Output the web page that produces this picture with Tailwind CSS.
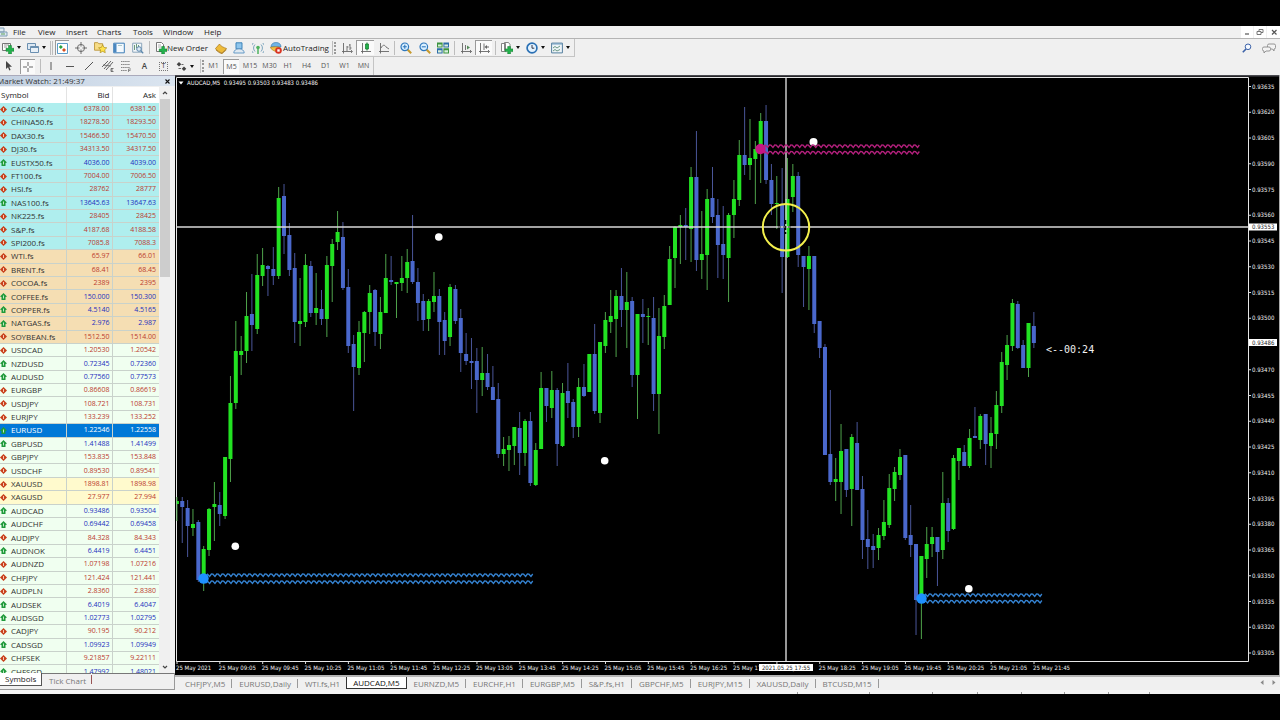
<!DOCTYPE html>
<html lang="en">
<head>
<meta charset="utf-8">
<title>AUDCAD,M5</title>
<script src="https://cdn.jsdelivr.net/npm/@tailwindcss/browser@4"></script>
</head>
<body class="flex h-screen flex-col overflow-hidden bg-black py-[26px] font-['Open_Sans','Noto_Sans',sans-serif] text-[8px] leading-[12px] text-[#222]">

<!-- Menu bar -->
<header class="flex h-[13px] shrink-0 items-center border-b border-[#b4b4b4] bg-[#f0f0f0]">
  <svg class="mr-[5px] h-[10px] w-[8px]" viewBox="0 0 8 10" fill="none"><path d="M0 1h4v4H0M0 5h7v4H0" fill="#dfeaf2" stroke="#7f9db5"/><path d="M2 6v2M4 6v2" stroke="#5aa05a"/></svg>
  <nav class="flex items-center whitespace-nowrap">
    <button class="w-[25px] text-left">File</button>
    <button class="w-[28px] text-left">View</button>
    <button class="w-[31px] text-left">Insert</button>
    <button class="w-[36px] text-left">Charts</button>
    <button class="w-[30px] text-left">Tools</button>
    <button class="w-[41px] text-left">Window</button>
    <button class="text-left">Help</button>
  </nav>
  <div class="ml-auto flex h-full items-center">
    <button aria-label="Minimize" class="flex h-full w-[12px] items-center justify-center bg-white"><svg class="size-[8px]" viewBox="0 0 8 8"><path d="M2 6h4" stroke="#555" stroke-width="1.2"/></svg></button>
    <button aria-label="Restore" class="ml-px flex h-full w-[12px] items-center justify-center bg-white"><svg class="size-[8px]" viewBox="0 0 8 8" fill="none" stroke="#666"><path d="M3 3V1.500h4V4.500H5M1 3.500h4v3H1z" stroke-width=".9"/></svg></button>
    <button aria-label="Close" class="ml-px flex h-full w-[13px] items-center justify-center bg-white"><svg class="size-[8px]" viewBox="0 0 8 8" stroke="#555"><path d="M2 2l4.500 4.500M6.500 2L2 6.500" stroke-width="1.200"/></svg></button>
  </div>
</header>

<!-- Standard toolbar -->
<div class="flex h-[18px] shrink-0 items-stretch bg-[#f0f0f0]">
  <div class="flex items-center whitespace-nowrap border-r border-b border-[#c4c4c4]">
    <button aria-label="New chart" class="flex w-[24px] items-center gap-[3px] pl-[2px]"><svg class="size-[12px]" viewBox="0 0 12 12"><path d="M.5 1.500h8v7h-8z" fill="#fff" stroke="#777"/><path d="M2 3h5M2 5h3" stroke="#999"/><path d="M6.500 3.500h3v2.800h2.500v3H9.500V12h-3V9.300H4v-3h2.500z" fill="#22b14c" stroke="#117a2a" stroke-width=".5"/></svg><svg class="h-[3px] w-[4px]" viewBox="0 0 4 3"><path d="M0 0h4L2 3z" fill="#111"/></svg></button>
    <button aria-label="Profiles" class="flex w-[24px] items-center gap-[3px] pl-[3px]"><svg class="size-[12px]" viewBox="0 0 12 12"><path d="M.5 1.500h8v6h-8z" fill="#dce8f3" stroke="#6a8fb0"/><path d="M3.500 4.500h8v6h-8z" fill="#e8f0f7" stroke="#6a8fb0"/><path d="M4 5.500h7" stroke="#6a8fb0"/></svg><svg class="h-[3px] w-[4px]" viewBox="0 0 4 3"><path d="M0 0h4L2 3z" fill="#111"/></svg></button>
    <span class="ml-[2px] h-[14px] w-[3px] border-x border-[#bdbdbd]"></span>
    <button aria-label="Market watch" class="ml-[2px] flex h-[15px] w-[14px] items-center justify-center border-t border-l border-[#9a9a9a] bg-[#fafafa]"><svg class="size-[11px]" viewBox="0 0 11 11"><path d="M.5.500h10v10H.5z" fill="#fff" stroke="#5b9bc8"/><path d="M3.800 2l2 2.100-2 2-2-2z" fill="#2aa13c"/><path d="M7 5l2 2.100-2 2-2-2z" fill="#d8501f"/></svg></button>
    <button aria-label="Data window" class="ml-[2px] flex w-[20px] justify-center"><svg class="size-[12px]" viewBox="0 0 12 12" fill="none" stroke="#6e6e6e"><circle cx="6" cy="6" r="3.600"/><path d="M6 0v4.500M6 7.500V12M0 6h4.500M7.500 6H12"/></svg></button>
    <button aria-label="Navigator" class="flex w-[18px] justify-center"><svg class="size-[13px]" viewBox="0 0 12 12"><path d="M.5 1.500h3l1 1h3.500v6H.5z" fill="#f7dd86" stroke="#b99235" stroke-width=".8"/><path d="M8 3.500l1.200 2.400 2.600.4-1.900 1.800.5 2.700L8 9.600l-2.400 1.200.5-2.700-1.900-1.800 2.600-.4z" fill="#ffe24a" stroke="#a88a1a" stroke-width=".6"/></svg></button>
    <button aria-label="Terminal" class="flex w-[19px] justify-center"><svg class="size-[12px]" viewBox="0 0 12 12"><path d="M.7 1.200h10.600v9.600H.7z" fill="#f4f9fd" stroke="#3f7fb8"/><path d="M1 1.700h2.500v8.600H1z" fill="#4a87c0"/><path d="M5 3.500h4" stroke="#9bb" stroke-width=".8"/></svg></button>
    <button aria-label="Strategy tester" class="flex w-[19px] justify-center"><svg class="size-[12px]" viewBox="0 0 12 12" fill="none"><path d="M.7 1.200h9v9h-9z" fill="#f3f7fa" stroke="#8aa5bb"/><path d="M2.500 3v5M4.500 2v4M6.500 3v3" stroke="#6b9a7c"/><circle cx="7" cy="7" r="2.300" fill="#dceaf5" stroke="#5c87ac"/><path d="M8.700 8.700l2.500 2.500" stroke="#5c87ac" stroke-width="1.300"/></svg></button>
    <span class="ml-[2px] h-[13px] w-px bg-[#bdbdbd]"></span>
    <button class="ml-[5px] flex w-[56px] items-center"><svg class="size-[12px] shrink-0" viewBox="0 0 12 12"><path d="M1.500.500h5l2 2v7h-7z" fill="#fff" stroke="#777"/><path d="M3 3h3M3 5h3" stroke="#999" stroke-width=".8"/><path d="M6.700 4.500h2.800v2.400H12v2.700H9.500V12H6.700V9.600H4.200V6.900h2.500z" fill="#22b14c" stroke="#117a2a" stroke-width=".5"/></svg>New Order</button>
    <button aria-label="MetaEditor" class="flex w-[19px] justify-center"><svg class="size-[12px]" viewBox="0 0 12 12"><path d="M.5 6.500L4.500 2c1 2 4 3.500 7 4.500L7 11C4 10 2 8.500.5 6.500z" fill="#eebb3a" stroke="#a87514" stroke-width=".7"/><path d="M.8 7.800C2.500 9.500 4.500 11 7 11.700l4.500-4" fill="none" stroke="#a87514" stroke-width=".8"/></svg></button>
    <button aria-label="Community" class="flex w-[18px] justify-center"><svg class="size-[12px]" viewBox="0 0 12 12"><path d="M3 .8h6v6H3z" fill="#8ec5ec" stroke="#3d83ba"/><path d="M.8 11c0-2.400 2-4.200 5.200-4.200s5.200 1.800 5.200 4.200z" fill="#dfe9f1" stroke="#5a92c2" stroke-width=".9"/></svg></button>
    <button aria-label="Signals" class="flex w-[19px] justify-center"><svg class="size-[12px]" viewBox="0 0 12 12" fill="none" stroke="#7ba4bd"><path d="M3 2.500a5 5 0 000 7M9 2.500a5 5 0 010 7M1.200 1a7 7 0 000 10M10.800 1a7 7 0 010 10"/><circle cx="6" cy="5.500" r="1.800" fill="#4fb35f" stroke="none"/><path d="M6 6v6" stroke="#4fb35f" stroke-width="1.500"/></svg></button>
    <button class="flex w-[63px] items-center gap-px pl-[3px]"><svg class="size-[12px] shrink-0" viewBox="0 0 12 12"><path d="M1 5c0-3 2-4.500 5-4.500S11 2 11 5z" fill="#6fb4e6" stroke="#2f74a8" stroke-width=".6"/><path d="M0 5.500c3-1 8-1 10 0l-2 3.500c-2 1-5 0-8-3.500z" fill="#f0bf45" stroke="#a87514" stroke-width=".6"/><circle cx="8.500" cy="8.500" r="3.300" fill="#d93422"/><path d="M7.300 7.300h2.400v2.400H7.300z" fill="#fff"/></svg>AutoTrading</button>
    <span class="ml-[2px] h-[14px] w-px bg-[#bdbdbd]"></span>
    <span class="ml-px h-[12px] w-[2px] border-l-2 border-dotted border-[#999]"></span>
    <button aria-label="Bar chart" class="ml-[2px] flex w-[18px] justify-center"><svg class="size-[12px]" viewBox="0 0 12 12" fill="none" stroke="#666"><path d="M2.500 1v10.500M1 9.500h10M6 4v5M6 5h1.500M9 2v6M8 3h1M9 6h1.500" stroke-width=".9"/><path d="M10 8l1.500 1.500L10 11" stroke-width=".8"/></svg></button>
    <button aria-label="Candlesticks" class="flex h-[15px] w-[18px] items-center justify-center border-t border-l border-[#9a9a9a] bg-[#fafafa]"><svg class="size-[12px]" viewBox="0 0 12 12" fill="none" stroke="#666"><path d="M2.500 1v10.500M1 9.500h10" stroke-width=".9"/><path d="M7 .5v8" stroke="#117a2a"/><path d="M5.500 2h3v5h-3z" fill="#22b14c" stroke="#117a2a" stroke-width=".7"/></svg></button>
    <button aria-label="Line chart" class="flex w-[19px] justify-center"><svg class="size-[12px]" viewBox="0 0 12 12" fill="none" stroke="#666"><path d="M2.500 1v10.500M1 9.500h10M3 6c2-4 4-3 5-1l3 2" stroke-width=".9"/></svg></button>
    <span class="ml-px h-[14px] w-px bg-[#bdbdbd]"></span>
    <button aria-label="Zoom in" class="ml-px flex w-[19px] justify-center"><svg class="size-[12px]" viewBox="0 0 12 12" fill="none"><path d="M7.500 7.500l3.700 3.700" stroke="#c79a2d" stroke-width="2"/><circle cx="4.800" cy="4.800" r="3.800" fill="#d9efff" stroke="#2f78bd" stroke-width="1.200"/><path d="M2.800 4.800h4M4.800 2.800v4" stroke="#2f78bd" stroke-width="1.100"/></svg></button>
    <button aria-label="Zoom out" class="flex w-[19px] justify-center"><svg class="size-[12px]" viewBox="0 0 12 12" fill="none"><path d="M7.500 7.500l3.700 3.700" stroke="#c79a2d" stroke-width="2"/><circle cx="4.800" cy="4.800" r="3.800" fill="#d9efff" stroke="#2f78bd" stroke-width="1.200"/><path d="M2.800 4.800h4" stroke="#2f78bd" stroke-width="1.100"/></svg></button>
    <button aria-label="Tile windows" class="flex w-[18px] justify-center"><svg class="size-[12px]" viewBox="0 0 12 12"><path d="M0 .5h5.600v5H0zM6.400 6.200H12v5.300H6.400z" fill="#3d9440"/><path d="M6.400.5H12v5H6.400zM0 6.200h5.600v5.300H0z" fill="#2d6da8"/><path d="M1 2.500h3.600v2H1zM7.400 2.500H11v2H7.400zM1 8.200h3.600v2.300H1zM7.400 8.200H11v2.300H7.400z" fill="#d9f0dc"/></svg></button>
    <span class="ml-[2px] h-[14px] w-px bg-[#bdbdbd]"></span>
    <button aria-label="Auto scroll" class="ml-[2px] flex w-[18px] justify-center"><svg class="size-[12px]" viewBox="0 0 12 12" fill="none" stroke="#666"><path d="M2.500 1v10.500M1 9.500h10.500M5.500 3v5M10 8l1.500 1.500L10 11" stroke-width=".9"/><path d="M7 3.500L10 5.500 7 7.500z" fill="#558a5a" stroke="none"/></svg></button>
    <button aria-label="Chart shift" class="flex h-[15px] w-[17px] items-center justify-center border-t border-l border-[#9a9a9a] bg-[#fafafa]"><svg class="size-[12px]" viewBox="0 0 12 12" fill="none" stroke="#666"><path d="M2.500 1v10.500M1 9.500h10.500M10 8l1.500 1.500L10 11M6 1.500V8" stroke-width=".9"/><path d="M11 5H8" /><path d="M9 3L6.500 5 9 7z" fill="#666" stroke="none"/></svg></button>
    <span class="ml-[3px] h-[14px] w-px bg-[#bdbdbd]"></span>
    <button aria-label="Indicators" class="ml-[5px] flex w-[22px] items-center gap-[3px]"><svg class="size-[12px]" viewBox="0 0 12 12"><path d="M.5 1.500h4v8h-4zM3.500.500h4l1.500 2v6H3.500z" fill="#fff" stroke="#777" stroke-width=".9"/><path d="M6.700 4.500h2.800v2.400H12v2.700H9.500V12H6.700V9.600H4.200V6.900h2.500z" fill="#22b14c" stroke="#117a2a" stroke-width=".5"/></svg><svg class="h-[3px] w-[4px]" viewBox="0 0 4 3"><path d="M0 0h4L2 3z" fill="#111"/></svg></button>
    <button aria-label="Periods" class="flex w-[25px] items-center gap-[3px] pl-[3px]"><svg class="size-[12px]" viewBox="0 0 12 12" fill="none"><circle cx="6" cy="6" r="4.900" fill="#e4f3ff" stroke="#2a70b4" stroke-width="1.700"/><path d="M6 3v3.200h2.300" stroke="#223" stroke-width=".9"/></svg><svg class="h-[3px] w-[4px]" viewBox="0 0 4 3"><path d="M0 0h4L2 3z" fill="#111"/></svg></button>
    <button aria-label="Templates" class="flex w-[26px] items-center gap-[3px] pl-[3px]"><svg class="size-[12px]" viewBox="0 0 12 12" fill="none"><path d="M.6 1.100h10.800v9.800H.6z" fill="#eef4f8" stroke="#557f9f"/><path d="M1 2h10" stroke="#6f9dbf"/><path d="M2 6l2-1.500 2 1.500 3-2M2 9l2-1.500L6 9l3-1.500" stroke="#5c8f78" stroke-width=".9"/></svg><svg class="h-[3px] w-[4px]" viewBox="0 0 4 3"><path d="M0 0h4L2 3z" fill="#111"/></svg></button>
  </div>
  <div class="ml-auto flex items-center gap-[10px] pr-[4px]">
    <button aria-label="Search"><svg class="size-[10px]" viewBox="0 0 10 10" fill="none" stroke="#3c62a8"><circle cx="6" cy="3.800" r="2.800" fill="#f5f9ff"/><path d="M4 6L.8 9.300" stroke-width="1.600"/></svg></button>
    <button aria-label="Chat"><svg class="h-[11px] w-[14px]" viewBox="0 0 14 11" fill="#f3f3f3" stroke="#8b8b8b" stroke-width=".9"><path d="M7 1h5a1.500 1.500 0 011.500 1.500v2A1.500 1.500 0 0112 6v2L10.500 6H7a1.500 1.500 0 01-1.500-1.500v-2A1.500 1.500 0 017 1z"/><path d="M2 4h5a1.500 1.500 0 011.500 1.500v1A1.500 1.500 0 017 8H4l-2 2V8a1.500 1.500 0 01-1.500-1.500v-1A1.500 1.500 0 012 4z"/></svg></button>
  </div>
</div>

<!-- Drawing tools and timeframes -->
<div class="flex h-[18px] shrink-0 items-stretch bg-[#f0f0f0]">
  <div class="flex items-center border-r border-[#c4c4c4] text-[7px] text-[#555]">
    <button aria-label="Cursor" class="flex w-[16px] justify-center"><svg class="size-[10px]" viewBox="0 0 10 10"><path d="M3 0v8l2-1.800L6.300 9.500l1.300-.6L6.300 5.800H9z" fill="#444"/></svg></button>
    <button aria-label="Crosshair" class="ml-[4px] flex h-[15px] w-[15px] items-center justify-center border-t border-l border-[#9a9a9a] bg-[#fafafa]"><svg class="size-[10px]" viewBox="0 0 10 10" stroke="#666"><path d="M5 0v4M5 6v4M0 5h4M6 5h4"/></svg></button>
    <span class="ml-[5px] h-[14px] w-px bg-[#bdbdbd]"></span>
    <button aria-label="Vertical line" class="flex w-[19px] justify-center"><svg class="size-[10px]" viewBox="0 0 10 10" stroke="#555"><path d="M5 1v8"/></svg></button>
    <button aria-label="Horizontal line" class="flex w-[19px] justify-center"><svg class="size-[10px]" viewBox="0 0 10 10" stroke="#555"><path d="M1 5.500h8"/></svg></button>
    <button aria-label="Trendline" class="flex w-[19px] justify-center"><svg class="size-[10px]" viewBox="0 0 10 10" stroke="#555"><path d="M1 9l8-8"/></svg></button>
    <button aria-label="Channel" class="flex w-[19px] justify-center"><svg class="size-[12px]" viewBox="0 0 12 12" fill="none" stroke="#555"><path d="M0 7l6-6M2 9l7-8M4 10l7-8" stroke-width=".9"/><path d="M1 5l8 1" stroke-width=".7"/><path d="M9 8.500h2.500M9 8.500v3h2.500M9 10h2" stroke-width=".8"/></svg></button>
    <button aria-label="Fibonacci" class="flex w-[18px] justify-center"><svg class="size-[12px]" viewBox="0 0 12 12" fill="none" stroke="#777"><path d="M1 1.500h9M1 4.500h9M1 7.500h9M1 10.500h6" stroke-dasharray="1.500 .6" stroke-width=".9"/><path d="M8.500 9v3M8.500 9H11M8.500 10.500h2" stroke-width=".8"/></svg></button>
    <button aria-label="Text" class="flex w-[19px] justify-center text-[8px] font-semibold text-[#444]">A</button>
    <button aria-label="Text label" class="flex w-[19px] justify-center"><span class="flex size-[9px] items-center justify-center border border-dotted border-[#777] text-[7px] text-[#333]">T</span></button>
    <button aria-label="Arrows" class="flex w-[24px] items-center justify-center gap-[3px]"><svg class="size-[11px]" viewBox="0 0 11 11"><path d="M3 1l2.300 2.300L3 5.600.7 3.300zM8 5.500l2.300 2.300L8 10 5.700 7.800z" fill="#444"/><path d="M5.500 3.500h2M2.500 7.500h2.500" stroke="#666"/></svg><svg class="h-[3px] w-[4px]" viewBox="0 0 4 3"><path d="M0 0h4L2 3z" fill="#111"/></svg></button>
    <span class="ml-[3px] h-[14px] w-px bg-[#c4c4c4]"></span>
    <span class="ml-px h-[12px] w-[2px] border-l-2 border-dotted border-[#999]"></span>
    <button class="w-[19px]">M1</button>
    <button class="h-[15px] w-[16px] border-t border-l border-[#9a9a9a] bg-[#fafafa] leading-[13px]">M5</button>
    <button class="ml-px w-[20px]">M15</button>
    <button class="w-[19px]">M30</button>
    <button class="w-[18px]">H1</button>
    <button class="w-[19px]">H4</button>
    <button class="w-[19px]">D1</button>
    <button class="w-[19px]">W1</button>
    <button class="w-[19px]">MN</button>
  </div>
</div>

<main class="flex min-h-0 flex-1 items-stretch bg-[#f0f0f0]">
  <!-- Market watch -->
  <aside class="flex w-[175px] shrink-0 flex-col border-t border-[#aab] bg-[#f0f0f0]">
    <div class="flex h-[10px] items-center justify-between bg-linear-to-r from-[#c3d1e2] to-[#dbe5f0] pr-[4px] leading-[8px] text-[#333]">
      <h2 class="ml-[-3px] pb-px">Market Watch: 21:49:37</h2>
      <button aria-label="Close panel" class="mr-px"><svg class="size-[5px]" viewBox="0 0 5 5" stroke="#111"><path d="M.5.500l4 4M4.500.500l-4 4" stroke-width="1.100"/></svg></button>
    </div>
    <div class="mt-px flex min-h-0 flex-1">
      <div class="w-[159px] overflow-hidden bg-white">
        <table class="h-[592px] w-full table-fixed border-collapse">
          <thead><tr class="h-[16px]">
            <th class="w-[66px] border-r border-[#e3e3e3] p-0 pl-px text-left font-normal">Symbol</th>
            <th class="w-[46px] border-r border-[#e3e3e3] p-0 pr-[2px] text-right font-normal">Bid</th>
            <th class="p-0 pr-[3px] text-right font-normal">Ask</th>
          </tr></thead>
          <tbody id="quotes" class="leading-[10px]"></tbody>
        </table>
      </div>
      <div class="ml-px flex w-[10px] flex-col items-center">
        <svg class="my-[3px] h-[6px] w-[6px]" viewBox="0 0 6 6" fill="none" stroke="#444"><path d="M1 4l2-2 2 2" stroke-width="1.200"/></svg>
        <div class="h-[178px] w-full bg-[#cdcdcd]"></div>
        <svg class="mt-auto mb-[3px] h-[6px] w-[6px]" viewBox="0 0 6 6" fill="none" stroke="#444"><path d="M1 2l2 2 2-2" stroke-width="1.200"/></svg>
      </div>
    </div>
    <div class="flex h-[17px] items-start border-r border-b border-[#999] pb-[3px]">
      <button class="h-[13px] w-[42px] border-r border-b border-[#555] bg-white pl-[5px] text-left">Symbols</button>
      <button class="h-[13px] w-[49px] border-t border-[#777] pr-[2px] pl-[7px] text-left leading-[11px] text-[#777]">Tick Chart</button>
      <span class="mt-[2px] h-[9px] w-px bg-[#955]"></span>
      <span class="h-px flex-1 bg-[#777]"></span>
    </div>
  </aside>

  <!-- Chart window -->
  <section class="flex min-w-0 flex-1 flex-col">
    <svg id="chart" class="min-h-0 w-full flex-1 bg-black font-['DejaVu_Sans_Condensed','DejaVu_Sans',sans-serif] text-[6px]" viewBox="175 75 1105 600" fill="#f2f2f2" role="img" aria-label="AUDCAD five minute candlestick chart">
      <path d="M175 75.500h1105" stroke="#4a4a50" stroke-width="2"/>
      <path d="M1279.500 75v600" stroke="#aaa"/>
      <path d="M176.500 661.500v-584h1072v584z" fill="none" stroke="#e6e6e6"/>
      <path d="M178.500 81.500h5l-2.500 3z" fill="#fff"/>
      <text x="187" y="85" xml:space="preserve">AUDCAD,M5  0.93495 0.93503 0.93483 0.93486</text>
      <g id="axes"></g>
      <circle cx="813.500" cy="142" r="4" fill="#fff"/>
      <g id="candles"></g>
      <path d="M177 227h1071M786 78v583" stroke="#d8d8d8" stroke-width="1.400"/>
      <g id="zones" fill="none" stroke-width="1.300"></g>
      <circle cx="203.500" cy="578.500" r="5.200" fill="#1e90ff"/>
      <circle cx="921.500" cy="598.500" r="5.200" fill="#1e90ff"/>
      <circle cx="760.500" cy="149" r="5.200" fill="#c71585"/>
      <g fill="#fff"><circle cx="235.300" cy="546.300" r="3.800"/><circle cx="438.800" cy="237" r="3.800"/><circle cx="604.700" cy="460.700" r="3.800"/><circle cx="968.800" cy="588.700" r="3.800"/></g>
      <circle cx="786" cy="227.300" r="23.200" fill="none" stroke="#f3f04c" stroke-width="2"/>
      <path d="M785.500 220v14" stroke="#000" stroke-width="1.500" stroke-dasharray="4 2"/>
      <path d="M778 227h15" stroke="#333" stroke-dasharray="3 2"/>
      <path d="M1249 223.500h28v7h-28zM1249 339h28v7h-28zM759 664h54v7h-54z" fill="#fff"/>
      <g fill="#222"><text x="1252" y="229">0.93553</text><text x="1252" y="345">0.93486</text><text x="786" y="670" text-anchor="middle">2021.05.25 17:55</text></g>
      <text x="1046" y="353" class="font-['DejaVu_Sans_Mono',monospace] text-[10px]">&lt;--00:24</text>
    </svg>
    <div class="h-[2px] shrink-0 bg-[#b4b4b4]"></div>
    <div class="flex h-[13px] shrink-0 items-start pl-[3px]">
      <nav id="tabs" class="flex h-[12px] items-center whitespace-nowrap leading-[11px] text-[#777]"></nav>
      <div class="ml-auto flex items-center gap-[8px] pt-[3px] pr-[4px]">
        <button aria-label="Scroll tabs left"><svg class="h-[5px] w-[4px]" viewBox="0 0 4 5"><path d="M3.500 0v5L.5 2.500z" fill="#888"/></svg></button>
        <button aria-label="Scroll tabs right"><svg class="h-[5px] w-[4px]" viewBox="0 0 4 5"><path d="M.5 0v5l3-2.500z" fill="#888"/></svg></button>
      </div>
    </div>
  </section>
</main>
<footer class="flex h-[4px] shrink-0 items-end justify-end bg-[#f4f4f4] pr-[130px]">
  <span class="h-[2px] w-[73px] border-x border-[#999]"></span><span class="h-[2px] w-[63px] border-r border-[#999]"></span><span class="h-[2px] w-[45px] border-r border-[#999]"></span><span class="h-[2px] w-[44px] border-r border-[#999]"></span><span class="h-[2px] w-[43px] border-r border-[#999]"></span><span class="h-[2px] w-[44px] border-r border-[#999]"></span><span class="h-[2px] w-[41px] border-r border-[#999]"></span>
</footer>

<script>
// Quotes: symbol, bid, ask, direction (u = up, d = down)
const quotes = `CAC40.fs 6378.00 6381.50 d
CHINA50.fs 18278.50 18293.50 d
DAX30.fs 15466.50 15470.50 d
DJ30.fs 34313.50 34317.50 d
EUSTX50.fs 4036.00 4039.00 u
FT100.fs 7004.00 7006.50 d
HSI.fs 28762 28777 d
NAS100.fs 13645.63 13647.63 u
NK225.fs 28405 28425 d
S&amp;P.fs 4187.68 4188.58 d
SPI200.fs 7085.8 7088.3 d
WTI.fs 65.97 66.01 d
BRENT.fs 68.41 68.45 d
COCOA.fs 2389 2395 d
COFFEE.fs 150.000 150.300 u
COPPER.fs 4.5140 4.5165 u
NATGAS.fs 2.976 2.987 u
SOYBEAN.fs 1512.50 1514.00 d
USDCAD 1.20530 1.20542 d
NZDUSD 0.72345 0.72360 u
AUDUSD 0.77560 0.77573 u
EURGBP 0.86608 0.86619 d
USDJPY 108.721 108.731 d
EURJPY 133.239 133.252 d
EURUSD 1.22546 1.22558 u
GBPUSD 1.41488 1.41499 u
GBPJPY 153.835 153.848 d
USDCHF 0.89530 0.89541 d
XAUUSD 1898.81 1898.98 d
XAGUSD 27.977 27.994 d
AUDCAD 0.93486 0.93504 u
AUDCHF 0.69442 0.69458 u
AUDJPY 84.328 84.343 d
AUDNOK 6.4419 6.4451 u
AUDNZD 1.07198 1.07216 d
CHFJPY 121.424 121.441 d
AUDPLN 2.8360 2.8380 d
AUDSEK 6.4019 6.4047 u
AUDSGD 1.02773 1.02795 u
CADJPY 90.195 90.212 d
CADSGD 1.09923 1.09949 u
CHFSEK 9.21857 9.22111 d
CHFSGD 1.47992 1.48021 u`.split('\n').map(l => l.split(' '));

const arrowUp = '<svg class="h-[7px] w-[7px]" viewBox="0 0 7 7"><path d="M3.500 0L7 3.500 5.500 4V7h-4V4L0 3.500z" fill="#1f9a3a"/><path d="M3.500 2.500v3" stroke="#bfe8c5"/></svg>';
const arrowDown = '<svg class="h-[7px] w-[7px]" viewBox="0 0 7 7"><path d="M3.500 7L0 3.500 3.500 0 7 3.500z" fill="#c8401c"/><path d="M3.500 2v3" stroke="#f4c9b4"/></svg>';
document.getElementById('quotes').innerHTML = quotes.map(([s, b, a, d], i) => {
  const sel = s === 'EURUSD';
  const bg = sel ? 'bg-[#0078d7]' : i < 11 ? 'bg-[#afeeee]' : i < 18 ? 'bg-[#f5deb3]' : s[0] === 'X' ? 'bg-[#fffacd]' : 'bg-[#f0fff0]';
  const ink = sel ? 'text-white' : d === 'u' ? 'text-[#1c2fbe]' : 'text-[#bb3a2e]';
  const name = sel ? 'text-white' : 'text-[#333]';
  return `<tr class="${bg} border-b border-[#c9d2cb]">
    <td class="border-r border-[#c9d2cb] p-0 ${name}"><div class="flex items-center gap-[4px]">${d === 'u' ? arrowUp : arrowDown}<span>${s}</span></div></td>
    <td class="border-r border-[#c9d2cb] p-0 pr-[2px] text-right text-[7px] ${ink}">${b}</td>
    <td class="p-0 pr-[3px] text-right text-[7px] ${ink}">${a}</td></tr>`;
}).join('');

// Candles: colour, high, body top, body bottom, low
const candles = `g497,501,504,521 b497,501,507,543 b500,508,526,557 g509,524,528,536 b520,522,580,582 g546,549,580,591 g508,509,550,556 g482,504,507,541 b492,505,514,526 g457,457,516,519
g376,403,459,482 g321,351,403,409 g336,351,355,375 g292,316,351,363 b274,314,325,351 g254,275,329,334 g248,265,276,286 b265,266,269,296 b247,269,276,285 g187,198,276,279
b184,196,236,254 b223,235,270,276 b253,268,322,343 g278,321,324,346 g254,265,322,327 b261,266,313,317 g273,308,313,325 b290,309,319,325 g256,265,319,337 g239,244,266,302
g211,232,242,250 b222,237,288,290 b269,287,346,353 b335,344,367,411 g321,332,368,375 g311,312,333,362 g285,293,312,334 b289,290,332,346 g297,312,334,349 g254,278,313,313
b256,280,282,285 g282,282,284,318 g256,278,283,291 g249,262,278,293 b215,261,282,284 b268,282,303,321 b294,301,320,331 g299,301,319,331 g272,296,302,312 b289,296,322,355
b312,320,341,355 g284,287,337,346 b285,289,321,324 b309,318,353,372 b333,354,361,365 b338,361,363,389 b348,361,380,413 g347,373,380,396 b354,373,387,390 b366,387,400,400
b383,399,454,458 g437,449,454,466 g436,445,450,471 g427,427,446,465 b412,428,453,475 g419,421,453,466 b412,421,483,486 g443,450,485,486 g372,388,449,449 b388,388,406,422
g371,390,408,418 b388,390,444,466 g383,393,446,447 b363,391,403,418 b399,402,427,438 g378,387,427,437 b364,387,396,397 g354,354,392,392 b324,354,411,414 g342,342,413,423
g312,320,346,353 g290,316,322,333 g290,296,319,357 b268,296,310,327 g272,302,310,348 b297,301,375,387 g314,314,375,419 b299,314,317,343 g308,316,317,345 b297,318,394,411
g308,336,394,434 g295,306,337,349 g246,259,305,305 g226,227,258,288 g215,225,227,264 b208,225,227,260 g167,177,229,262 b131,177,260,271 g211,254,260,279 g189,199,255,290
b167,198,217,223 b199,215,245,278 b206,244,255,279 g213,215,258,302 g180,199,215,238 g140,155,200,206 b107,155,165,175 g119,158,165,180 g141,149,159,204 g113,121,150,183
b105,121,180,184 b164,180,204,215 g176,203,204,229 b168,204,257,293 g158,199,257,258 g164,176,197,212 b172,176,255,267 b256,256,267,307 g246,256,269,310 b256,256,324,333
b321,321,348,358 b344,347,455,455 b390,454,482,485 g458,479,482,501 g424,451,482,514 b449,449,490,497 g434,437,489,526 b422,443,490,490 b476,489,540,559 b510,539,547,569
b534,546,550,568 g528,535,548,560 g500,522,536,540 g474,488,525,528 g467,472,489,501 g449,457,475,480 b455,455,538,540 b505,535,545,557 b544,544,600,635 g556,556,600,639
g527,544,559,578 g527,537,544,557 b537,537,552,586 g472,503,550,559 b498,503,531,542 g455,458,529,530 g448,448,461,480 b445,452,466,466 g429,438,466,468 b407,436,438,438
g414,416,440,449 b414,414,444,465 g417,433,446,468 g391,405,434,449 g352,362,406,413 g335,345,365,380 g299,303,346,351 b301,304,348,349 b340,345,368,368 g323,323,368,377 b312,326,343,348`.split(/\s+/);
document.getElementById('candles').innerHTML = candles.map((c, i) => {
  const [hi, top, bot, lo] = c.slice(1).split(',').map(Number);
  const x = 176.9 + i * 5.356, up = c[0] === 'g';
  const left = Math.max(x - 2, 177);
  return `<path d="M${x} ${hi}V${lo}" stroke="${up ? '#4fa34b' : '#4a5699'}"/><rect x="${left}" y="${top}" width="${x + 2 - left}" height="${bot - top}" fill="${up ? '#22e222' : '#4a68cc'}"/>`;
}).join('');

// Price and time scales
let axes = '';
for (let i = 0; i < 23; i++) {
  const y = 86.5 + i * 25.75, p = (0.93635 - i * 0.00015).toFixed(5);
  axes += `<path d="M1248 ${y}h3" stroke="#ddd"/><text x="1252" y="${y + 2}">${p}</text>`;
}
for (let i = 0; i < 21; i++) {
  const t = 505 + i * 40, x = 176 + i * 42.85;
  const label = i ? `${String(Math.floor(t / 60)).padStart(2, '0')}:${String(t % 60).padStart(2, '0')}` : '2021';
  axes += `<path d="M${x + 1} 661v3" stroke="#ddd"/><text x="${x}" y="670">25 May ${label}</text>`;
}
document.getElementById('axes').innerHTML = axes;

// Supply and demand bands drawn as paired waves
const wave = (x0, x1, y, colour) => {
  let d = `M${x0} ${y + 1}`;
  for (let x = x0; x < x1 - 4; x += 5.356) d += `L${x + 1.6} ${y - 0.8}L${x + 3.6} ${y + 1.4}L${x + 5.356} ${y - 1}`;
  return `<path d="${d}" stroke="${colour}"/>`;
};
document.getElementById('zones').innerHTML =
  wave(206, 532, 575, '#3583d2') + wave(206, 532, 582, '#3583d2') +
  wave(764, 923, 146, '#b3207c') + wave(764, 923, 152.500, '#b3207c') +
  wave(924, 1041, 595, '#3583d2') + wave(924, 1041, 601.500, '#3583d2');

const names = ['CHFJPY,M5', 'EURUSD,Daily', 'WTI.fs,H1', 'AUDCAD,M5', 'EURNZD,M5', 'EURCHF,H1', 'EURGBP,M5', 'S&amp;P.fs,H1', 'GBPCHF,M5', 'EURJPY,M15', 'XAUUSD,Daily', 'BTCUSD,M15'];
document.getElementById('tabs').innerHTML = names.map((n, i) => i === 3
  ? `<button class="h-[12px] self-start border-x border-b border-[#333] bg-white px-[6px] text-[#111]">${n}</button>`
  : `<button class="pr-[6px] pl-[7px]">${n}</button>${i === 2 ? '' : '<span class="h-[9px] w-px bg-[#999]"></span>'}`).join('');
</script>
</body>
</html>
